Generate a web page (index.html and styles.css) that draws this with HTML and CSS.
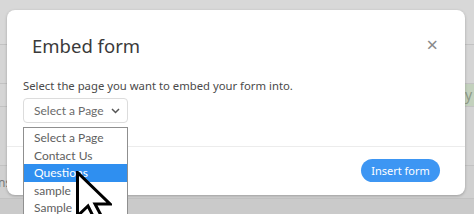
FILE: index.html
```
<!DOCTYPE html>
<html lang="en">
<head>
  <meta charset="UTF-8">
  <title>Embed form</title>
  <link rel="stylesheet" href="styles.css">
</head>
<body>
  <!-- Page dimmed behind the dialog -->
  <div class="page">
    <div class="row row-top"></div>
    <div class="row row-a"></div>
    <div class="row row-b"><span class="cell-green">y</span></div>
    <div class="row row-c"></div>
    <div class="row row-d"><span class="row-text">Questions</span></div>
    <div class="row row-foot"></div>
  </div>

  <!-- Dialog -->
  <div class="modal">
    <div class="modal-header">
      <h2 class="modal-title">Embed form</h2>
      <span class="modal-close">&times;</span>
    </div>
    <div class="modal-body">
      <p class="modal-label">Select the page you want to embed your form into.</p>
      <div class="select">
        <span>Select a Page</span>
        <svg class="chevron" width="9" height="6" viewBox="0 0 9 6"><path d="M1 1 L4.5 4.5 L8 1" fill="none" stroke="#555" stroke-width="1.5"/></svg>
      </div>
    </div>
    <div class="modal-footer">
      <button class="btn-insert">Insert form</button>
    </div>
  </div>

  <!-- Open native-style dropdown -->
  <ul class="dropdown">
    <li>Select a Page</li>
    <li>Contact Us</li>
    <li class="active">Questions</li>
    <li>sample</li>
    <li>Sample</li>
  </ul>

  <!-- Mouse pointer -->
  <svg class="cursor" width="36" height="52" viewBox="0 0 36 52">
    <path d="M1.5 1.5 L1.5 45 L12 35 L20 51 L27 48 L19 33 L34 33 Z" fill="#fff" stroke="#000" stroke-width="3" stroke-linejoin="miter"/>
  </svg>
</body>
</html>
```

FILE: styles.css
```
body {
  margin: 0;
  width: 474px;
  height: 214px;
  overflow: hidden;
  position: relative;
  background: #d2d2d2;
  font-family: "Noto Sans", "Open Sans", sans-serif;
}
/* Page behind the overlay */
.page {
  display: flex;
  flex-direction: column;
  height: 214px;
}
.row {
  border-bottom: 1px solid #c2c2c2;
  position: relative;
}
.row-top { height: 44px; background: #d8d8d8; }
.row-a { height: 38px; background: #d5d5d5; }
.row-b {
  height: 22px;
  background: #d5d5d5;
  display: flex;
  justify-content: flex-end;
}
.cell-green {
  width: 9px;
  background: #c3d1bd;
  color: #8e9a88;
  font-size: 14px;
  line-height: 22px;
  overflow: hidden;
}
.row-c { height: 58px; background: #d3d3d3; }
.row-d {
  height: 32px;
  background: #d0d0d0;
}
.row-text {
  display: block;
  margin-left: -46px;
  margin-top: 8px;
  font-size: 12px;
  color: #777;
}
.row-foot { flex: 1; background: #cacaca; border-bottom: none; }

/* Dialog */
.modal {
  position: absolute;
  left: 7px;
  top: 10px;
  width: 458px;
  height: 185px;
  background: #fff;
  border-radius: 8px;
  box-shadow: 0 1px 3px rgba(0,0,0,0.25);
  display: flex;
  flex-direction: column;
}
.modal-header {
  display: flex;
  align-items: center;
  justify-content: space-between;
  padding: 20px 27px 0 25px;
  height: 30px;
}
.modal-title {
  margin: 0;
  font-size: 18.5px;
  font-weight: 400;
  color: #3a3a3a;
}
.modal-close {
  font-size: 20px;
  color: #8a8a8a;
  line-height: 1;
}
.modal-body {
  padding: 18px 16px 0;
  height: 87px;
  border-bottom: 1px solid #ececec;
  box-sizing: border-box;
}
.modal-label {
  margin: 0 0 5px;
  font-size: 11.3px;
  color: #4a4a4a;
}
.select {
  width: 105px;
  height: 25px;
  box-sizing: border-box;
  border: 1px solid #dcdcdc;
  border-radius: 4px;
  display: flex;
  align-items: center;
  justify-content: space-between;
  padding: 0 7px 0 10px;
  font-family: Lato, "Noto Sans", sans-serif;
  font-size: 12px;
  color: #6a6a6a;
}
.modal-footer {
  display: flex;
  justify-content: flex-end;
  padding: 12px 25px 0;
}
.btn-insert {
  width: 79px;
  height: 23px;
  border: none;
  border-radius: 12px;
  background: #3d96f3;
  color: #fff;
  font-family: inherit;
  font-size: 11px;
  padding: 0;
}

/* Dropdown list */
.dropdown {
  position: absolute;
  left: 23px;
  top: 127px;
  width: 105px;
  margin: 0;
  padding: 1px 0 0;
  list-style: none;
  background: #fff;
  border: 1px solid #8f8f8f;
  border-bottom: none;
  box-sizing: border-box;
  font-family: Lato, "Noto Sans", sans-serif;
  font-size: 12px;
  color: #606060;
}
.dropdown li {
  height: 17.5px;
  line-height: 17.5px;
  padding-left: 10px;
}
.dropdown li.active {
  background: #2f8ff0;
  color: #fff;
}

.cursor {
  position: absolute;
  left: 76px;
  top: 171px;
}
```
